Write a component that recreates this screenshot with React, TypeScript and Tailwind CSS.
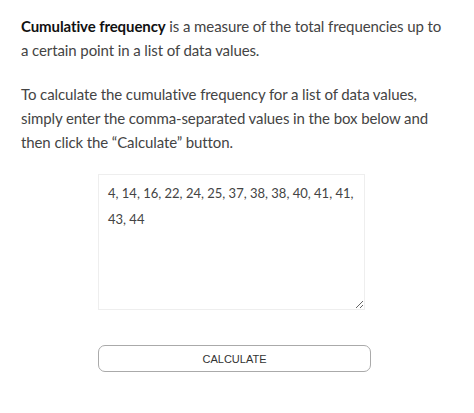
import React from 'react';

const App: React.FC = () => {
  return (
    <div className="min-h-screen bg-white px-[21px] pt-[14px] text-[15px] leading-[24px] tracking-[-0.1px] text-[#444]" style={{ fontFamily: 'Lato, "Liberation Sans", sans-serif' }}>
      <div className="max-w-[424px]">
        <p>
          <span className="font-bold text-[#111]">Cumulative frequency</span> is a measure of the total frequencies up to a certain point in a list of data values.
        </p>
        <p className="mt-[20px]">
          To calculate the cumulative frequency for a list of data values, simply enter the comma-separated values in the box below and then click the “Calculate” button.
        </p>
      </div>
      <div className="ml-[77px] mt-[20px] w-[267px]">
        <textarea
          className="block h-[136px] w-full resize-y border border-[#eee] px-[9px] py-[5px] text-[13px] leading-[26px] tracking-normal text-[#444] outline-none"
          style={{ fontFamily: 'Lato, "Liberation Sans", sans-serif' }}
          defaultValue="4, 14, 16, 22, 24, 25, 37, 38, 38, 40, 41, 41, 43, 44"
        />
      </div>
      <button
        className="ml-[77px] mt-[35px] flex h-[27px] w-[273px] items-center justify-center rounded-[7px] border border-[#aaa] text-[11px] tracking-normal text-[#333]"
        style={{ fontFamily: '"Liberation Sans", Arial, sans-serif' }}
      >
        CALCULATE
      </button>
    </div>
  );
};

export default App;
